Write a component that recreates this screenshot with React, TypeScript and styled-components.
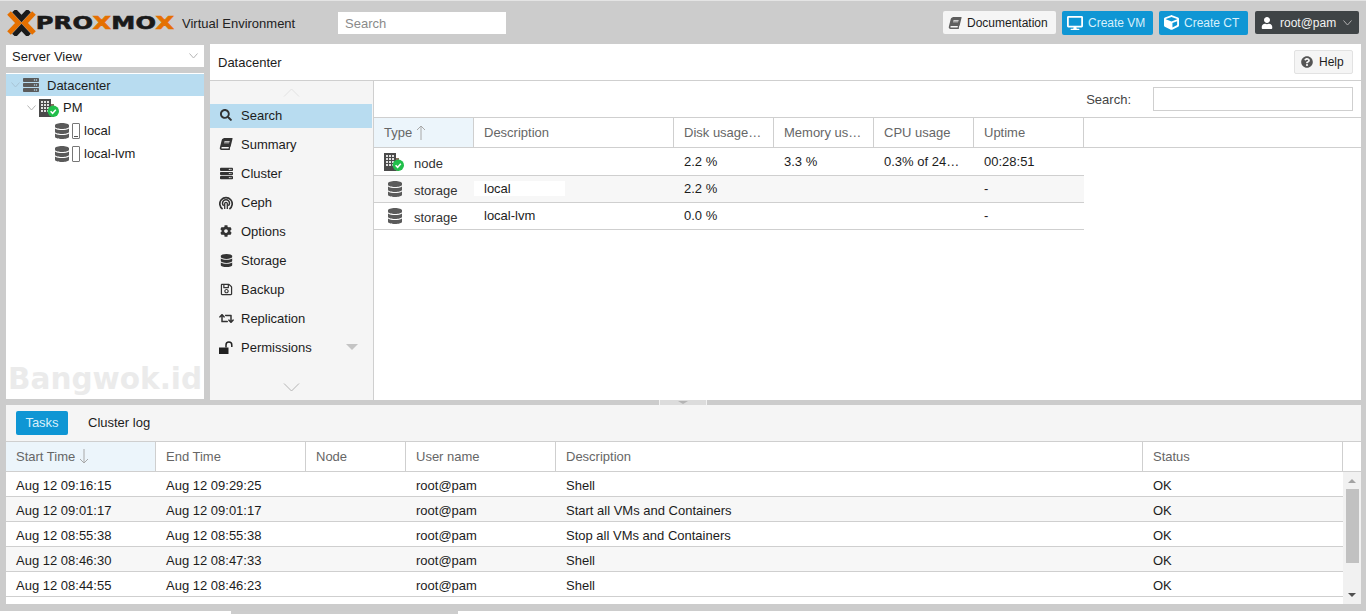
import React from 'react'
import styled, { createGlobalStyle } from 'styled-components'
import {
  FaBook,
  FaCog,
  FaCube,
  FaDatabase,
  FaDesktop,
  FaQuestionCircle,
  FaRegSave,
  FaRetweet,
  FaSearch,
  FaServer,
  FaUser,
} from 'react-icons/fa'

const GlobalStyle = createGlobalStyle`
  html, body {
    margin: 0;
    padding: 0;
    overflow: hidden;
    background: #cccccc;
  }
  * {
    box-sizing: border-box;
  }
`

const Page = styled.div`
  width: 1366px;
  height: 614px;
  display: flex;
  flex-direction: column;
  overflow: hidden;
  background: #cccccc;
  border-top: 1px solid #e4e4e4;
  color: #1c1c1c;
  font-family: 'Liberation Sans', Arial, sans-serif;
  font-size: 13px;
`

const Header = styled.header`
  height: 43px;
  display: flex;
  align-items: center;
  padding: 0 7px;
  flex: none;
`

const LogoMark = styled.svg`
  width: 29px;
  height: 26px;
  flex: none;
`

const LogoWord = styled.div`
  width: 146px;
  flex: none;
  color: #1a1a1a;
  font-family: 'DejaVu Sans', sans-serif;
  font-weight: 700;
  font-size: 18px;
  line-height: 20px;
  white-space: nowrap;
  letter-spacing: 0.2px;
  -webkit-text-stroke: 0.6px currentColor;
  transform: scaleX(1.34);
  transform-origin: 1px 50%;
`

const LogoX = styled.span`
  color: #e57000;
`

const Product = styled.div`
  width: 156px;
  flex: none;
  padding-top: 1px;
  color: #222;
`

const TopSearch = styled.input`
  width: 168px;
  height: 22px;
  border: 0;
  outline: 0;
  padding: 2px 7px 0;
  background: #fff;
  font: inherit;
  &::placeholder {
    color: #8a8a8a;
    opacity: 1;
  }
`

const TopActions = styled.div`
  display: flex;
  align-items: center;
  gap: 6px;
  margin-left: auto;
`

const BookIcon = styled(FaBook)`
  transform: skewX(-14deg);
`

const TopButton = styled.div<{ $kind: 'light' | 'blue' | 'dark'; $width: number }>`
  width: ${p => p.$width}px;
  height: ${p => (p.$kind === 'blue' ? 24 : 23)}px;
  margin-left: ${p => (p.$kind === 'dark' ? 1 : 0)}px;
  display: flex;
  align-items: center;
  gap: ${p => (p.$kind === 'light' ? 6 : p.$kind === 'blue' ? 5 : 7)}px;
  padding: 0 ${p => (p.$kind === 'blue' ? 5 : 6)}px;
  border-radius: 2px;
  white-space: nowrap;
  font-size: 12px;
  background: ${p => (p.$kind === 'light' ? '#f5f5f5' : p.$kind === 'blue' ? '#0f96d4' : '#3f4446')};
  color: ${p => (p.$kind === 'light' ? '#1c1c1c' : p.$kind === 'blue' ? '#d8f0fb' : '#f3f3f3')};
  svg {
    flex: none;
    color: ${p => (p.$kind === 'light' ? '#5e5e5e' : '#fff')};
  }
`

const Main = styled.div`
  height: 356px;
  flex: none;
  display: flex;
  gap: 6px;
  padding: 0 5px 0 6px;
`

const LeftColumn = styled.aside`
  width: 198px;
  flex: none;
  display: flex;
  flex-direction: column;
  gap: 6px;
  padding: 1px 0 1px;
`

const ViewSelect = styled.div`
  height: 22px;
  flex: none;
  display: flex;
  align-items: center;
  justify-content: space-between;
  padding: 0 6px;
  background: #fff;
`

const Tree = styled.div`
  position: relative;
  flex: 1;
  padding-top: 1px;
  background: #fff;
`

const TreeRow = styled.div<{ $indent: number; $selected?: boolean; $gap: number }>`
  height: ${p => (p.$selected ? 22 : 23)}px;
  display: flex;
  align-items: center;
  gap: ${p => p.$gap}px;
  padding-left: ${p => p.$indent}px;
  background: ${p => (p.$selected ? '#b8dcf0' : 'transparent')};
  svg {
    flex: none;
  }
`

const TreeIcon = styled.span<{ $width: number }>`
  width: ${p => p.$width}px;
  display: flex;
  justify-content: center;
  color: #5a5a5a;
  flex: none;
`

const TreeLabel = styled.span<{ $offset: number }>`
  margin-left: ${p => p.$offset}px;
`

const Chevron = styled.svg<{ $tone?: string }>`
  width: 9px;
  height: 6px;
  flex: none;
  fill: none;
  stroke: ${p => p.$tone || '#b5b5b5'};
  stroke-width: 1;
`

const PhoneBox = styled.span<{ $dash?: boolean }>`
  position: relative;
  width: 8px;
  height: 16px;
  flex: none;
  margin-left: -1px;
  border: 1px solid #777;
  border-radius: 1px;
  &::after {
    content: '';
    display: ${p => (p.$dash ? 'block' : 'none')};
    position: absolute;
    left: 1px;
    right: 1px;
    bottom: 1px;
    height: 1px;
    background: #555;
  }
`

const Watermark = styled.div`
  position: absolute;
  left: 2px;
  bottom: 3px;
  color: #ebebeb;
  font-family: 'DejaVu Sans', sans-serif;
  font-weight: 700;
  font-size: 29.5px;
  line-height: 34px;
  white-space: nowrap;
`

const Content = styled.section`
  flex: 1;
  min-width: 0;
  display: flex;
  flex-direction: column;
  background: #fff;
`

const ContentHeader = styled.div`
  height: 37px;
  flex: none;
  display: flex;
  align-items: center;
  justify-content: space-between;
  padding: 0 8px;
  border-bottom: 1px solid #cfcfcf;
`

const HelpButton = styled.div`
  width: 59px;
  height: 24px;
  display: flex;
  align-items: center;
  gap: 6px;
  padding-left: 6px;
  border: 1px solid #e2e2e2;
  border-radius: 2px;
  background: #f5f5f5;
  font-size: 12px;
  svg {
    color: #555;
    font-size: 12px;
  }
`

const ContentBody = styled.div`
  flex: 1;
  display: flex;
  min-height: 0;
`

const Nav = styled.nav`
  width: 164px;
  flex: none;
  display: flex;
  flex-direction: column;
  border-right: 1px solid #cfcfcf;
  background: #f5f5f5;
`

const NavArrow = styled.div<{ $down?: boolean }>`
  display: flex;
  justify-content: center;
  align-items: center;
  height: ${p => (p.$down ? 24 : 23)}px;
  margin-top: ${p => (p.$down ? 'auto' : 0)};
  margin-bottom: ${p => (p.$down ? 1 : 0)}px;
  padding-right: 1px;
`

const NavItem = styled.div<{ $active?: boolean }>`
  width: 162px;
  height: 24px;
  flex: none;
  margin-bottom: 5px;
  display: flex;
  align-items: center;
  padding: 0 14px 2px 8px;
  background: ${p => (p.$active ? '#b8dcf0' : 'transparent')};
`

const NavIcon = styled.span`
  width: 16px;
  margin-right: 7px;
  display: flex;
  justify-content: center;
  color: #333;
  font-size: 12px;
  flex: none;
`

const Caret = styled.span`
  margin-left: auto;
  width: 0;
  height: 0;
  border-left: 6px solid transparent;
  border-right: 6px solid transparent;
  border-top: 6px solid #c4c4c4;
`

const GridPanel = styled.div`
  flex: 1;
  min-width: 0;
  display: flex;
  flex-direction: column;
`

const GridToolbar = styled.div`
  height: 37px;
  flex: none;
  display: flex;
  align-items: center;
  justify-content: flex-end;
  gap: 22px;
  padding-right: 8px;
  border-bottom: 1px solid #cfcfcf;
  color: #444;
`

const GridSearch = styled.div`
  width: 200px;
  height: 24px;
  border: 1px solid #cfcfcf;
  background: #fff;
`

const HeadRow = styled.div`
  height: 30px;
  flex: none;
  display: flex;
  border-bottom: 1px solid #cfcfcf;
`

const HeadCell = styled.div<{ $width: number; $sorted?: boolean }>`
  width: ${p => p.$width}px;
  flex: none;
  display: flex;
  align-items: center;
  gap: 4px;
  padding-left: 10px;
  border-right: 1px solid #cfcfcf;
  background: ${p => (p.$sorted ? '#ecf5fb' : '#fff')};
  color: #666;
  white-space: nowrap;
`

const SortArrow = styled.svg`
  width: 10px;
  height: 15px;
  fill: none;
  stroke: #a8a8a8;
  stroke-width: 1;
`

const DataRow = styled.div<{ $alt?: boolean; $first?: boolean }>`
  width: 710px;
  height: ${p => (p.$first ? 28 : 27)}px;
  flex: none;
  display: flex;
  align-items: center;
  padding-bottom: ${p => (p.$first ? 0 : 2)}px;
  border-bottom: 1px solid #cfcfcf;
  background: ${p => (p.$alt ? '#f7f7f7' : '#fff')};
`

const DataCell = styled.div<{ $width: number }>`
  width: ${p => p.$width}px;
  flex: none;
  padding-left: 10px;
  white-space: nowrap;
  overflow: hidden;
`

const TypeCell = styled.div<{ $node: boolean }>`
  width: 100px;
  flex: none;
  display: flex;
  align-items: center;
  padding-left: ${p => (p.$node ? 10 : 13)}px;
  padding-top: ${p => (p.$node ? 0 : 2)}px;
  gap: ${p => (p.$node ? 10 : 11)}px;
  color: #333;
  svg {
    flex: none;
  }
`

const TypeLabel = styled.span`
  padding-top: 3px;
`

const Blanked = styled.span`
  display: block;
  width: 91px;
  margin-left: -10px;
  padding-left: 10px;
  background: #fff;
`

const Splitter = styled.div`
  height: 5px;
  flex: none;
  display: flex;
  justify-content: center;
`

const SplitHandle = styled.div`
  width: 48px;
  display: flex;
  justify-content: center;
  align-items: center;
  background: #dcdcdc;
  border-left: 1px solid #f2f2f2;
  border-right: 1px solid #f2f2f2;
  &::after {
    content: '';
    border-left: 5px solid transparent;
    border-right: 5px solid transparent;
    border-top: 3px solid #b4b4b4;
  }
`

const BottomPanel = styled.section`
  height: 199px;
  flex: none;
  margin: 0 5px 0 6px;
  display: flex;
  flex-direction: column;
  background: #fff;
`

const TabBar = styled.div`
  height: 37px;
  flex: none;
  display: flex;
  align-items: center;
  gap: 20px;
  padding: 0 10px;
  background: #f5f5f5;
  border-bottom: 1px solid #cfcfcf;
`

const Tab = styled.div<{ $active?: boolean }>`
  width: ${p => (p.$active ? '52px' : 'auto')};
  height: 24px;
  display: flex;
  align-items: center;
  justify-content: center;
  padding-bottom: 2px;
  border-radius: 2px;
  background: ${p => (p.$active ? '#0f96d4' : 'transparent')};
  color: ${p => (p.$active ? '#d8f0fb' : '#1c1c1c')};
`

const TaskBody = styled.div`
  flex: 1;
  min-height: 0;
  display: flex;
`

const TaskRows = styled.div`
  flex: 1;
  min-width: 0;
`

const TaskRow = styled.div<{ $alt?: boolean }>`
  height: 25px;
  display: flex;
  align-items: center;
  padding-top: 2px;
  border-bottom: 1px solid #cfcfcf;
  background: ${p => (p.$alt ? '#f7f7f7' : '#fff')};
`

const Scrollbar = styled.div`
  width: 18px;
  flex: none;
  display: flex;
  flex-direction: column;
  align-items: center;
  background: #f1f1f1;
`

const ScrollArrow = styled.span<{ $down?: boolean }>`
  width: 0;
  height: 0;
  margin-top: ${p => (p.$down ? 'auto' : '7px')};
  margin-bottom: ${p => (p.$down ? '7px' : 0)};
  border-left: 4px solid transparent;
  border-right: 4px solid transparent;
  border-top: ${p => (p.$down ? '4px solid #505050' : 0)};
  border-bottom: ${p => (p.$down ? 0 : '4px solid #a3a3a3')};
`

const ScrollThumb = styled.div`
  width: 13px;
  height: 74px;
  margin-top: 6px;
  background: #c1c1c1;
`

const PageGap = styled.div`
  height: 7px;
  flex: none;
`

const PageScrollbar = styled.div`
  flex: 1;
  padding-left: 231px;
  background: #fff;
`

const PageThumb = styled.div`
  width: 227px;
  height: 100%;
  background: #cdcdcd;
`

const NodeIcon = () => (
  <svg width="20" height="18" viewBox="0 0 20 18">
    <path d="M0 0h12v18H0z" fill="#4a4a4a" />
    <path d="M12 5h3v13h-3z" fill="#8a6f5e" />
    <path
      d="M2 2h2v2H2zM5 2h2v2H5zM8 2h2v2H8zM2 5h2v2H2zM5 5h2v2H5zM8 5h2v2H8zM2 8h2v2H2zM5 8h2v2H5zM8 8h2v2H8zM2 11h2v2H2zM5 11h2v2H5zM8 11h2v2H8z"
      fill="#e0e0e0"
    />
    <circle cx="14.3" cy="12.2" r="5.7" fill="#21bf4b" />
    <path d="M11.6 12.3l2 2 3.2-3.6" fill="none" stroke="#fff" strokeWidth="1.5" />
  </svg>
)

const CephIcon = () => (
  <svg width="14" height="15" viewBox="0 0 14 15" fill="none" stroke="#333">
    <path d="M3.6 14A6.2 6.2 0 1 1 10.4 14" strokeWidth="1.7" />
    <path d="M4.7 10.8A3.5 3.5 0 1 1 9.3 10.8" strokeWidth="1.5" />
    <path d="M5.7 14V8.6A1.3 1.3 0 1 1 8.3 8.6V14" strokeWidth="1.3" />
  </svg>
)

const UnlockIcon = () => (
  <svg width="14" height="13" viewBox="0 0 14 13" fill="none">
    <path d="M0 6.5h9.5V13H0z" fill="#222" />
    <path d="M7 6.5V4a2.9 2.9 0 0 1 5.8 0v2" stroke="#222" strokeWidth="1.5" />
  </svg>
)

const ChevronDown = ({ tone }: { tone?: string }) => (
  <Chevron $tone={tone} viewBox="0 0 9 6">
    <path d="M0.5 0.5L4.5 5L8.5 0.5" />
  </Chevron>
)

const navItems = [
  { label: 'Search', icon: <FaSearch /> },
  { label: 'Summary', icon: <BookIcon /> },
  { label: 'Cluster', icon: <FaServer size={13} /> },
  { label: 'Ceph', icon: <CephIcon /> },
  { label: 'Options', icon: <FaCog /> },
  { label: 'Storage', icon: <FaDatabase size={13} /> },
  { label: 'Backup', icon: <FaRegSave size={13} /> },
  { label: 'Replication', icon: <FaRetweet size={15} /> },
  { label: 'Permissions', icon: <UnlockIcon /> },
]

const resourceColumns = [
  { label: 'Type', width: 100, sorted: true },
  { label: 'Description', width: 200 },
  { label: 'Disk usage…', width: 100 },
  { label: 'Memory us…', width: 100 },
  { label: 'CPU usage', width: 100 },
  { label: 'Uptime', width: 110 },
]

const resources = [
  { type: 'node', description: '', disk: '2.2 %', memory: '3.3 %', cpu: '0.3% of 24…', uptime: '00:28:51' },
  { type: 'storage', description: 'local', disk: '2.2 %', memory: '', cpu: '', uptime: '-' },
  { type: 'storage', description: 'local-lvm', disk: '0.0 %', memory: '', cpu: '', uptime: '-' },
]

const taskColumns = [
  { label: 'Start Time', width: 150, sorted: true },
  { label: 'End Time', width: 150 },
  { label: 'Node', width: 100 },
  { label: 'User name', width: 150 },
  { label: 'Description', width: 587 },
  { label: 'Status', width: 200 },
]

const tasks = [
  ['Aug 12 09:16:15', 'Aug 12 09:29:25', 'Shell'],
  ['Aug 12 09:01:17', 'Aug 12 09:01:17', 'Start all VMs and Containers'],
  ['Aug 12 08:55:38', 'Aug 12 08:55:38', 'Stop all VMs and Containers'],
  ['Aug 12 08:46:30', 'Aug 12 08:47:33', 'Shell'],
  ['Aug 12 08:44:55', 'Aug 12 08:46:23', 'Shell'],
]

export default function App() {
  return (
    <Page>
      <GlobalStyle />
      <Header>
        <LogoMark viewBox="0 0 29 26" fill="none" strokeWidth="5">
          <path d="M2 3L11.5 13L2 23" stroke="#e57000" />
          <path d="M27 3L17.5 13L27 23" stroke="#e57000" />
          <path d="M7 0.5L14.5 8.5L22 0.5" stroke="#1a1a1a" />
          <path d="M7 25.5L14.5 17.5L22 25.5" stroke="#1a1a1a" />
        </LogoMark>
        <LogoWord>
          PRO<LogoX>X</LogoX>MO<LogoX>X</LogoX>
        </LogoWord>
        <Product>Virtual Environment</Product>
        <TopSearch placeholder="Search" />
        <TopActions>
          <TopButton $kind="light" $width={113}>
            <BookIcon size={12} />
            Documentation
          </TopButton>
          <TopButton $kind="blue" $width={91}>
            <FaDesktop size={16} />
            Create VM
          </TopButton>
          <TopButton $kind="blue" $width={89}>
            <FaCube size={15} />
            Create CT
          </TopButton>
          <TopButton $kind="dark" $width={104}>
            <FaUser size={12} />
            root@pam
            <ChevronDown tone="#b0b0b0" />
          </TopButton>
        </TopActions>
      </Header>

      <Main>
        <LeftColumn>
          <ViewSelect>
            Server View
            <ChevronDown />
          </ViewSelect>
          <Tree>
            <TreeRow $indent={5} $selected $gap={2}>
              <ChevronDown tone="#a9c4d4" />
              <TreeIcon $width={17}>
                <FaServer size={16} />
              </TreeIcon>
              <TreeLabel $offset={6}>Datacenter</TreeLabel>
            </TreeRow>
            <TreeRow $indent={21} $gap={3}>
              <ChevronDown />
              <NodeIcon />
              <TreeLabel $offset={1}>PM</TreeLabel>
            </TreeRow>
            <TreeRow $indent={49} $gap={4}>
              <TreeIcon $width={14}>
                <FaDatabase size={16} />
              </TreeIcon>
              <PhoneBox $dash />
              local
            </TreeRow>
            <TreeRow $indent={49} $gap={4}>
              <TreeIcon $width={14}>
                <FaDatabase size={16} />
              </TreeIcon>
              <PhoneBox />
              local-lvm
            </TreeRow>
            <Watermark>Bangwok.id</Watermark>
          </Tree>
        </LeftColumn>

        <Content>
          <ContentHeader>
            Datacenter
            <HelpButton>
              <FaQuestionCircle />
              Help
            </HelpButton>
          </ContentHeader>
          <ContentBody>
            <Nav>
              <NavArrow>
                <svg width="17" height="9" viewBox="0 0 17 9" fill="none" stroke="#e2e2e2">
                  <path d="M1 8.5L8.5 1L16 8.5" />
                </svg>
              </NavArrow>
              {navItems.map((item, i) => (
                <NavItem key={item.label} $active={i === 0}>
                  <NavIcon>{item.icon}</NavIcon>
                  {item.label}
                  {item.label === 'Permissions' && <Caret />}
                </NavItem>
              ))}
              <NavArrow $down>
                <svg width="17" height="9" viewBox="0 0 17 9" fill="none" stroke="#b4b4b4">
                  <path d="M1 0.5L8.5 8L16 0.5" />
                </svg>
              </NavArrow>
            </Nav>
            <GridPanel>
              <GridToolbar>
                Search:
                <GridSearch />
              </GridToolbar>
              <HeadRow>
                {resourceColumns.map(col => (
                  <HeadCell key={col.label} $width={col.width} $sorted={col.sorted}>
                    {col.label}
                    {col.sorted && (
                      <SortArrow viewBox="0 0 10 15">
                        <path d="M5 15V1M1 5L5 1L9 5" />
                      </SortArrow>
                    )}
                  </HeadCell>
                ))}
              </HeadRow>
              {resources.map((row, i) => (
                <DataRow key={`${row.type}-${i}`} $alt={i === 1} $first={i === 0}>
                  <TypeCell $node={row.type === 'node'}>
                    {row.type === 'node' ? <NodeIcon /> : <FaDatabase size={16} color="#5a5a5a" />}
                    <TypeLabel>{row.type}</TypeLabel>
                  </TypeCell>
                  <DataCell $width={200}>
                    {row.description === 'local' ? <Blanked>local</Blanked> : row.description}
                  </DataCell>
                  <DataCell $width={100}>{row.disk}</DataCell>
                  <DataCell $width={100}>{row.memory}</DataCell>
                  <DataCell $width={100}>{row.cpu}</DataCell>
                  <DataCell $width={110}>{row.uptime}</DataCell>
                </DataRow>
              ))}
            </GridPanel>
          </ContentBody>
        </Content>
      </Main>

      <Splitter>
        <SplitHandle />
      </Splitter>

      <BottomPanel>
        <TabBar>
          <Tab $active>Tasks</Tab>
          <Tab>Cluster log</Tab>
        </TabBar>
        <HeadRow>
          {taskColumns.map(col => (
            <HeadCell key={col.label} $width={col.width} $sorted={col.sorted}>
              {col.label}
              {col.sorted && (
                <SortArrow viewBox="0 0 10 15">
                  <path d="M5 0V14M1 10L5 14L9 10" />
                </SortArrow>
              )}
            </HeadCell>
          ))}
        </HeadRow>
        <TaskBody>
          <TaskRows>
            {tasks.map((task, i) => (
              <TaskRow key={task[0]} $alt={i % 2 === 1}>
                <DataCell $width={150}>{task[0]}</DataCell>
                <DataCell $width={150}>{task[1]}</DataCell>
                <DataCell $width={100} />
                <DataCell $width={150}>root@pam</DataCell>
                <DataCell $width={587}>{task[2]}</DataCell>
                <DataCell $width={200}>OK</DataCell>
              </TaskRow>
            ))}
          </TaskRows>
          <Scrollbar>
            <ScrollArrow />
            <ScrollThumb />
            <ScrollArrow $down />
          </Scrollbar>
        </TaskBody>
      </BottomPanel>

      <PageGap />
      <PageScrollbar>
        <PageThumb />
      </PageScrollbar>
    </Page>
  )
}
